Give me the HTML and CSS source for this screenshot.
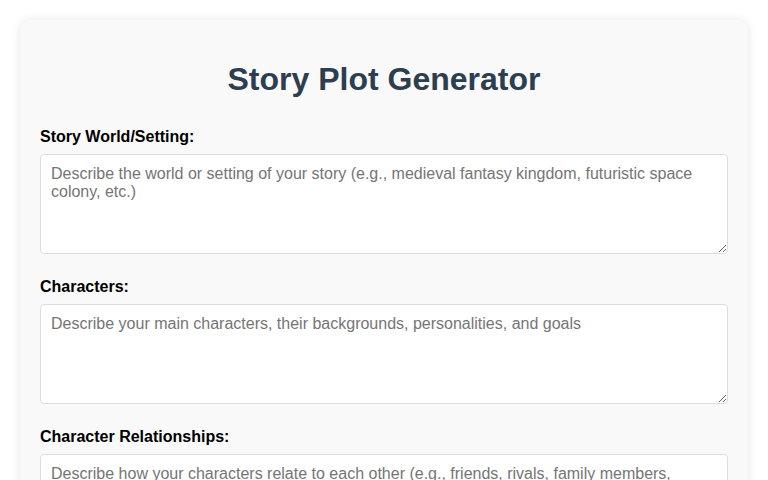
FILE: index.html
```html
<!DOCTYPE html>
<html lang="en">
<head>
<meta charset="UTF-8">
<title>Story Plot Generator</title>
<link rel="stylesheet" href="styles.css">
</head>
<body>
<div class="container">
  <h1 class="title">Story Plot Generator</h1>
  <div class="form-group">
    <label class="label" for="world">Story World/Setting:</label>
    <textarea class="field" id="world" placeholder="Describe the world or setting of your story (e.g., medieval fantasy kingdom, futuristic space colony, etc.)"></textarea>
  </div>
  <div class="form-group">
    <label class="label" for="chars">Characters:</label>
    <textarea class="field" id="chars" placeholder="Describe your main characters, their backgrounds, personalities, and goals"></textarea>
  </div>
  <div class="form-group">
    <label class="label" for="rel">Character Relationships:</label>
    <textarea class="field" id="rel" placeholder="Describe how your characters relate to each other (e.g., friends, rivals, family members, mentors, etc.)"></textarea>
  </div>
</div>
</body>
</html>
```
FILE: styles.css
```css
html, body {
  margin: 0;
  padding: 0;
  background: #ffffff;
}
body {
  padding: 20px;
  font-family: "Liberation Sans", Arial, sans-serif;
  color: #000;
}
.container {
  background: #f9f9f9;
  border-radius: 10px;
  box-shadow: 0 0 10px rgba(0, 0, 0, 0.1);
  padding: 20px;
}
.title {
  text-align: center;
  color: #2c3e50;
  font-size: 32px;
  font-weight: bold;
  margin: 21.44px 0 29.5px;
  line-height: 37px;
}
.form-group {
  margin-bottom: 24px;
}
.label {
  display: block;
  font-weight: bold;
  font-size: 16px;
  line-height: 18.4px;
  margin-bottom: 7.6px;
}
.field {
  display: block;
  width: 100%;
  height: 100px;
  box-sizing: border-box;
  padding: 10px;
  border: 1px solid #dddddd;
  border-radius: 4px;
  background: #ffffff;
  font-family: "Liberation Sans", Arial, sans-serif;
  font-size: 16px;
  line-height: 18px;
  margin: 0;
}
.field::placeholder {
  color: #757575;
}
```
